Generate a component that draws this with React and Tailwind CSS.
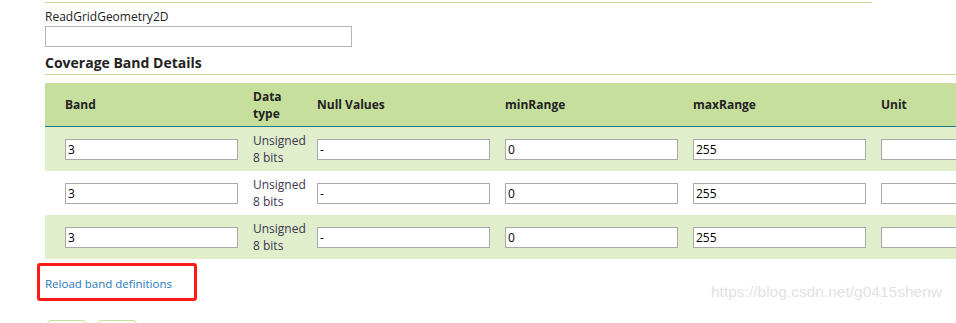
import React from 'react';

const ROWS = [
  { band: '3', type: ['Unsigned', '8 bits'], nul: '-', min: '0', max: '255', unit: '', shade: true },
  { band: '3', type: ['Unsigned', '8 bits'], nul: '-', min: '0', max: '255', unit: '', shade: false },
  { band: '3', type: ['Unsigned', '8 bits'], nul: '-', min: '0', max: '255', unit: '', shade: true },
];

const COLS = 'grid grid-cols-[188px_64px_188px_188px_188px_188px]';

function Field({ value }) {
  return (
    <input
      readOnly
      value={value}
      className="w-[173px] h-[21px] border border-[#a9a9a9] bg-white px-[2px] text-[12px] text-black outline-none"
    />
  );
}

export default function App() {
  return (
    <div
      className="relative w-[956px] h-[323px] overflow-hidden bg-white text-[#222]"
      style={{ fontFamily: '"Open Sans", "DejaVu Sans", sans-serif' }}
    >
      <div className="pl-[45px]">
        {/* top rule */}
        <div className="h-px w-[827px] bg-[#c6df9d] mt-[2px]" />

        <div className="mt-[6px] text-[12px] leading-[15px] text-[#222]">ReadGridGeometry2D</div>
        <input readOnly className="w-[307px] h-[21px] border border-[#b5b5b5] bg-white outline-none" />

        {/* heading */}
        <div className="mt-[6px] pb-[2px] border-b border-[#c6df9d] text-[14px] font-bold leading-[18px] text-[#222]">
          Coverage Band Details
        </div>

        {/* table */}
        <div className="mt-[8px] w-[1000px]">
          <div className={`${COLS} pl-[20px] h-[44px] items-center bg-[#c6df9d] border-b border-[#1a7b88] text-[12px] font-bold leading-[17px] text-[#222]`}>
            <div>Band</div>
            <div>Data<br />type</div>
            <div>Null Values</div>
            <div>minRange</div>
            <div>maxRange</div>
            <div>Unit</div>
          </div>
          {ROWS.map((r, i) => (
            <div
              key={i}
              className={`${COLS} pl-[20px] h-[44px] items-center text-[12px] leading-[17px] ${r.shade ? 'bg-[#e0eecc]' : 'bg-white'}`}
            >
              <div><Field value={r.band} /></div>
              <div className="text-[#3d3550]">{r.type[0]}<br />{r.type[1]}</div>
              <div><Field value={r.nul} /></div>
              <div><Field value={r.min} /></div>
              <div><Field value={r.max} /></div>
              <div><Field value={r.unit} /></div>
            </div>
          ))}
        </div>

        {/* reload link with red annotation box */}
        <div className="mt-[4px] -ml-[8px] w-[160px] h-[38px] border-[3px] border-[#ff1a1a] rounded-[3px] pl-[5px] flex items-end pb-[7px]">
          <a className="text-[11.5px] leading-[15px] text-[#1f7ab8] cursor-pointer">Reload band definitions</a>
        </div>

        {/* buttons peeking at bottom */}
        <div className="mt-[19px] flex gap-[10px] pl-[2px]">
          <div className="w-[40px] h-[20px] border border-[#c6df9d] rounded-[4px] bg-white" />
          <div className="w-[40px] h-[20px] border border-[#c6df9d] rounded-[4px] bg-white" />
        </div>
      </div>

      {/* watermark */}
      <div
        className="absolute left-[711px] top-[280px] text-[15.5px] text-[#e2e2e2]"
        style={{ fontFamily: '"Liberation Sans", Arial, sans-serif' }}
      >
        https://blog.csdn.net/g0415shenw
      </div>
    </div>
  );
}
